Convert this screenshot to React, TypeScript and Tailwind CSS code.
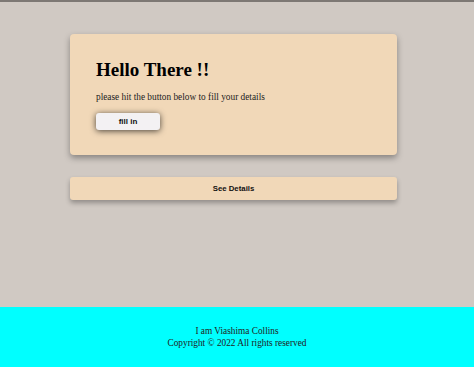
import React from "react";

const serif = "font-['Liberation_Serif','Times_New_Roman',serif]";
const sans = "font-['Liberation_Sans',Arial,sans-serif]";

export default function App() {
  return (
    <div className="flex min-h-[367px] w-full flex-col bg-[#d0c9c3]">
      <div className="h-[2px] w-full bg-[#7d7874]" />
      <main className="flex flex-1 flex-col px-[70px] pt-[32px]">
        <section className={`w-[327px] rounded-[4px] bg-[#f1d8b8] pb-[25px] pl-[26px] pt-[25px] shadow-[0_3px_6px_rgba(0,0,0,0.35)] ${serif}`}>
          <h1 className="text-[19px] font-bold leading-[22px] text-black">Hello There !!</h1>
          <p className="mt-[10px] text-[9.3px] leading-[12px] text-[#222]">
            please hit the button below to fill your details
          </p>
          <button
            className={`mt-[10px] flex h-[17px] w-[64px] items-center justify-center rounded-[3px] bg-[#f3f1f3] text-[8px] font-bold text-[#111] shadow-[0_1px_6px_rgba(0,0,0,0.7)] ${sans}`}
          >
            fill in
          </button>
        </section>
        <button
          className={`mt-[22px] flex h-[23px] w-[327px] items-center justify-center rounded-[3px] bg-[#f1d8b8] text-[7.8px] font-bold text-[#111] shadow-[0_3px_5px_rgba(0,0,0,0.3)] ${sans}`}
        >
          See Details
        </button>
      </main>
      <footer className={`mt-auto flex h-[60px] flex-col items-center justify-center bg-[#00ffff] text-[9.3px] leading-[12px] text-[#222] ${serif}`}>
        <p>I am Viashima Collins</p>
        <p>Copyright © 2022 All rights reserved</p>
      </footer>
    </div>
  );
}
